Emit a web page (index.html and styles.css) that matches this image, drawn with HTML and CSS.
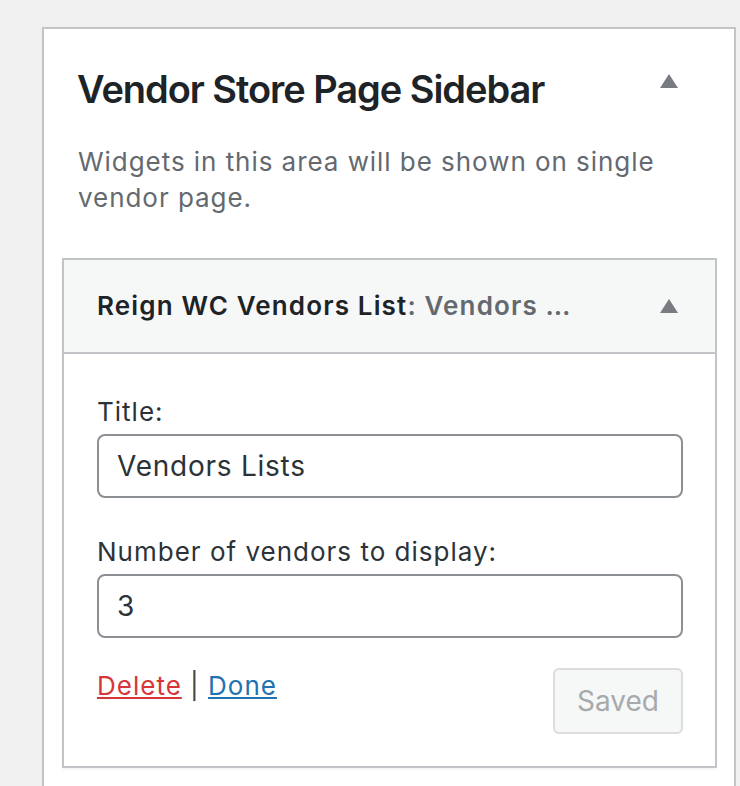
FILE: index.html
```html
<!DOCTYPE html>
<html lang="en">
<head>
<meta charset="utf-8">
<title>Vendor Store Page Sidebar</title>
<link rel="stylesheet" href="styles.css">
</head>
<body>
<div class="page">
  <div class="sidebar">
    <div class="sidebar-head">
      <h2 class="sidebar-title">Vendor Store Page Sidebar</h2>
      <span class="toggle toggle-head"><svg width="18" height="14" viewBox="0 0 18 14"><polygon points="9,0 18,14 0,14"/></svg></span>
    </div>
    <p class="sidebar-desc">Widgets in this area will be shown on single vendor page.</p>
    <div class="widget">
      <div class="widget-top">
        <h3 class="widget-title">Reign WC Vendors List<span class="in-title">: Vendors …</span></h3>
        <span class="toggle"><svg width="18" height="14" viewBox="0 0 18 14"><polygon points="9,0 18,14 0,14"/></svg></span>
      </div>
      <div class="widget-inside">
        <div class="field">
          <label class="field-label" for="w-title">Title:</label>
          <input class="field-input" id="w-title" type="text" value="Vendors Lists">
        </div>
        <div class="field field-next">
          <label class="field-label" for="w-num">Number of vendors to display:</label>
          <input class="field-input" id="w-num" type="text" value="3">
        </div>
        <div class="widget-actions">
          <div class="action-links"><a class="link-delete" href="#">Delete</a> <span class="sep">|</span> <a class="link-done" href="#">Done</a></div>
          <button class="btn-saved" type="button" disabled>Saved</button>
        </div>
      </div>
    </div>
  </div>
</div>
</body>
</html>
```

FILE: styles.css
```css
* { box-sizing: border-box; }

body {
  margin: 0;
  background: #f0f0f1;
  font-family: Inter, "Noto Sans", "Liberation Sans", sans-serif;
  color: #2c3338;
}

.page {
  padding: 27px 4px 0 42px;
}

.sidebar {
  background: #fff;
  border: 2px solid #c3c4c7;
  border-bottom: none;
  min-height: 800px;
  padding: 0 17px 0 18px;
}

.sidebar-head {
  display: flex;
  justify-content: space-between;
  align-items: flex-start;
  padding: 32px 39px 0 15px;
}

.sidebar-title {
  margin: 0;
  font-size: 38px;
  font-weight: 600;
  line-height: 56px;
  color: #1d2327;
  letter-spacing: -1.05px;
}

.toggle {
  display: flex;
  width: 18px;
  height: 14px;
}

.toggle svg { fill: #787c82; display: block; }

.toggle-head { margin-top: 13px; }

.sidebar-desc {
  margin: 26.5px 0 0;
  padding: 0 16px;
  font-size: 26px;
  line-height: 36.4px;
  color: #646970;
  letter-spacing: 0.95px;
}

.widget {
  margin-top: 41.7px;
  border: 2px solid #c3c4c7;
  background: #fff;
  box-shadow: 0 2px 2px rgba(0, 0, 0, 0.04);
}

.widget-top {
  background: #f6f7f7;
  border-bottom: 2px solid #c3c4c7;
  height: 94px;
  display: flex;
  align-items: center;
  justify-content: space-between;
  padding: 0 37px 0 33px;
}

.widget-title {
  margin: 0;
  font-size: 26px;
  font-weight: 600;
  line-height: 36.4px;
  color: #1d2327;
  white-space: nowrap;
  letter-spacing: 1.15px;
}

.in-title { color: #646970; }

.widget-inside {
  padding: 40px 32px 32px 33px;
}

.field-label {
  display: block;
  font-size: 26px;
  line-height: 36.4px;
  color: #2c3338;
  margin-bottom: 3.2px;
  letter-spacing: 1px;
}

.field-next { margin-top: 36.4px; }

.field-input {
  display: block;
  width: 100%;
  height: 64px;
  border: 2px solid #8c8f94;
  border-radius: 8px;
  padding: 0 18px;
  font-family: Inter, "Noto Sans", "Liberation Sans", sans-serif;
  font-size: 28px;
  letter-spacing: 0.75px;
  color: #2c3338;
  background: #fff;
  outline: none;
}

.widget-actions {
  margin-top: 30px;
  display: flex;
  justify-content: space-between;
  align-items: flex-start;
}

.action-links {
  font-size: 26px;
  line-height: 36.4px;
  color: #3c434a;
  letter-spacing: 1px;
}

.link-delete { color: #d63638; text-decoration: underline; }
.link-done { color: #2271b1; text-decoration: underline; }

.btn-saved {
  width: 130px;
  height: 66px;
  border: 2px solid #dcdcde;
  border-radius: 6px;
  background: #f6f7f7;
  color: #a7aaad;
  font-family: Inter, "Noto Sans", "Liberation Sans", sans-serif;
  font-size: 28px;
  padding: 0;
}
```
